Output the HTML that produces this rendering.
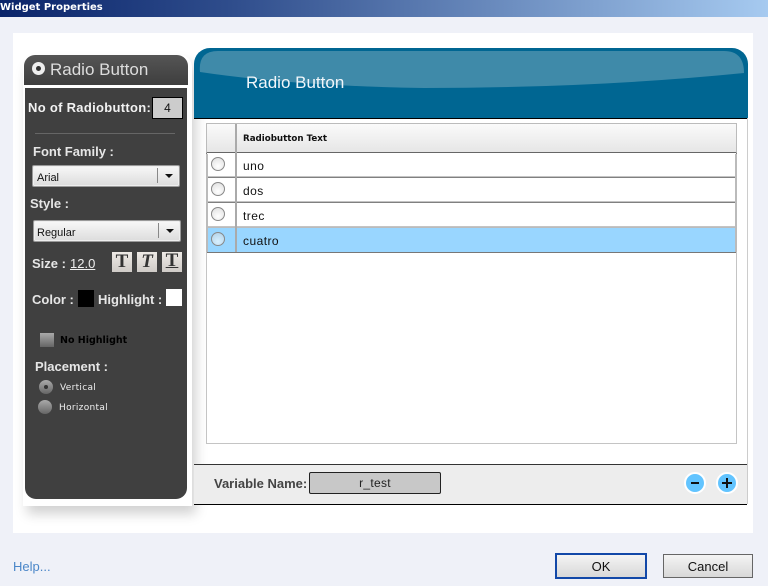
<!DOCTYPE html>
<html><head><meta charset="utf-8"><style>
html,body{margin:0;padding:0;width:768px;height:586px;overflow:hidden;background:#eff1f8;}
body{position:relative;font-family:"Liberation Sans",sans-serif;}
div,span{position:absolute;box-sizing:border-box;white-space:nowrap;}
.t{line-height:16px;}
.d{font-family:"DejaVu Sans",sans-serif;}
.lab{color:#e6e6e6;font-family:"Liberation Sans",sans-serif;font-weight:bold;font-size:13px;line-height:16px;}
.combo{background:linear-gradient(#f8f8f8,#dcdcdc);border:1px solid #999;border-radius:2px;height:22px;width:148px;box-shadow:inset 0 0 0 1px #eee;}
.tb{width:20px;height:20px;background:linear-gradient(#eeeae6,#cfcbc7);color:#333;font:bold 19px/20px "Liberation Serif",serif;text-align:center;}
.row{left:207px;width:529px;height:25px;background:#fff;border-bottom:1px solid #808080;box-shadow:inset 0 -1px 0 #c4c4c4;}
.radio{width:14px;height:14px;border-radius:50%;border:1px solid #888;background:radial-gradient(circle at 50% 70%,#fff,#dedede);left:211px;}
.cell{left:243px;font-size:12px;line-height:14px;color:#111;font-family:"Liberation Sans",sans-serif;letter-spacing:.45px;}
.rb{border-radius:50%;width:14px;height:14px;background:linear-gradient(#aaa,#666);}
</style></head><body>
<div style="left:0;top:0;width:768px;height:17px;background:linear-gradient(90deg,#0a246a,#2f4d8c 30%,#a6caf0);"></div>
<div class="t d" style="left:0;top:0;color:#fff;font-size:10px;font-weight:bold;">Widget Properties</div>
<div style="left:13px;top:33px;width:740px;height:500px;background:#fff;"></div>

<!-- Left panel -->
<div style="left:23px;top:55px;width:169px;height:451px;background:#fff;border-radius:12px 12px 0 0;box-shadow:4px 8px 12px rgba(0,0,0,.18);"></div>
<div style="left:24px;top:55px;width:164px;height:30px;background:linear-gradient(#555,#3e3e3e);border-radius:11px 11px 0 0;"></div>
<div style="left:25px;top:88px;width:162px;height:411px;background:#404040;border-radius:0 0 11px 11px;"></div>
<div style="left:32px;top:62px;width:13px;height:13px;border-radius:50%;background:#eee;"></div>
<div style="left:36px;top:66px;width:5px;height:5px;border-radius:50%;background:#333;"></div>
<div class="t" style="left:50px;top:61px;font-size:17px;line-height:18px;color:#ddd;">Radio Button</div>
<div class="lab" style="left:28px;top:100px;color:#f2f2f2;letter-spacing:.3px;">No of Radiobutton:</div>
<div style="left:152px;top:97px;width:31px;height:22px;background:#ccc;border:1px solid #000;color:#111;font-size:12px;line-height:20px;text-align:center;">4</div>
<div style="left:35px;top:133px;width:140px;height:1px;background:#666;"></div>
<div class="lab" style="left:33px;top:144px;">Font Family :</div>
<div class="combo" style="left:32px;top:165px;"></div>
<div class="t" style="left:37px;top:170px;font-size:11px;color:#111;">Arial</div>
<div style="left:157px;top:168px;width:1px;height:15px;background:#888;"></div>
<div style="left:165px;top:174px;border:4px solid transparent;border-top:4px solid #111;border-bottom:0;"></div>
<div class="lab" style="left:30px;top:196px;">Style :</div>
<div class="combo" style="left:33px;top:220px;"></div>
<div class="t" style="left:37px;top:225px;font-size:11px;color:#111;">Regular</div>
<div style="left:158px;top:223px;width:1px;height:15px;background:#888;"></div>
<div style="left:166px;top:229px;border:4px solid transparent;border-top:4px solid #111;border-bottom:0;"></div>
<div class="lab" style="left:32px;top:256px;">Size :</div>
<div class="t" style="left:70px;top:256px;font-size:13px;color:#eee;text-decoration:underline;">12.0</div>
<div class="tb" style="left:112px;top:252px;">T</div>
<div class="tb" style="left:137px;top:252px;font-style:italic;">T</div>
<div class="tb" style="left:162px;top:252px;text-decoration:underline;line-height:18px;">T</div>
<div class="lab" style="left:32px;top:292px;">Color :</div>
<div style="left:78px;top:290px;width:16px;height:17px;background:#000;"></div>
<div class="lab" style="left:98px;top:292px;">Highlight :</div>
<div style="left:166px;top:289px;width:16px;height:17px;background:#fff;"></div>
<div style="left:40px;top:333px;width:14px;height:14px;background:linear-gradient(#aaa,#666);"></div>
<div class="t d" style="left:60px;top:333px;font-size:9.5px;font-weight:bold;color:#000;">No Highlight</div>
<div class="lab" style="left:35px;top:359px;">Placement :</div>
<div class="rb" style="left:39px;top:380px;"></div>
<div style="left:44px;top:385px;width:4px;height:4px;border-radius:50%;background:#333;"></div>
<div class="t d" style="left:60px;top:380px;font-size:9px;color:#eee;letter-spacing:.3px;">Vertical</div>
<div class="rb" style="left:38px;top:400px;"></div>
<div class="t d" style="left:59px;top:400px;font-size:9px;color:#eee;letter-spacing:.3px;">Horizontal</div>

<!-- Right panel -->
<div style="left:194px;top:48px;width:554px;height:71px;background:#006692;border-radius:16px 16px 0 0;border-bottom:1px solid #000;overflow:hidden;"></div>
<svg style="position:absolute;left:194px;top:48px" width="554" height="50"><path d="M6 24 Q4 3 24 3 L530 3 Q550 3 550 25 Q400 40 230 40 Q100 38 6 24Z" fill="#3f8aa9"/></svg>
<div class="t" style="left:246px;top:74px;color:#f0f6fa;font-size:17px;line-height:18px;">Radio Button</div>
<div style="left:747px;top:118px;width:1px;height:386px;background:#ccc;"></div>
<div style="left:206px;top:123px;width:531px;height:321px;background:#fff;border:1px solid #c4c4c4;"></div>
<div style="left:206px;top:123px;width:531px;height:31px;background:linear-gradient(#fafafa,#e6e6e6);border:1px solid #bbb;border-bottom:2px solid #666;"></div>
<div class="t d" style="left:243px;top:131px;font-size:8.7px;font-weight:bold;color:#111;">Radiobutton Text</div>
<div class="row" style="top:153px;"></div>
<div class="row" style="top:178px;"></div>
<div class="row" style="top:203px;border-bottom-color:#bbb;"></div>
<div class="row" style="top:228px;background:#99d6ff;border-bottom-color:#777;box-shadow:none;"></div>
<div style="left:206px;top:154px;width:2px;height:98px;background:#bbb;"></div>
<div style="left:735px;top:154px;width:2px;height:98px;background:#bbb;"></div>
<div style="left:235px;top:124px;width:2px;height:128px;background:#aaa;"></div>
<div class="radio" style="top:157px;"></div>
<div class="radio" style="top:182px;"></div>
<div class="radio" style="top:207px;"></div>
<div class="radio" style="top:232px;background:radial-gradient(circle at 50% 70%,#d8f0ff,#b0d0e6);"></div>
<div class="cell" style="top:159px;">uno</div>
<div class="cell" style="top:184px;">dos</div>
<div class="cell" style="top:209px;">trec</div>
<div class="cell" style="top:234px;">cuatro</div>

<!-- Bottom bar -->
<div style="left:194px;top:464px;width:553px;height:41px;background:#ededed;border-top:1px solid #333;border-bottom:1px solid #000;"></div>
<div class="lab" style="left:214px;top:476px;color:#444;">Variable Name:</div>
<div style="left:309px;top:472px;width:132px;height:22px;background:#c8c8c8;border:1px solid #222;border-radius:2px;color:#222;font-size:12px;line-height:20px;text-align:center;letter-spacing:.3px;">r_test</div>
<div style="left:684px;top:472px;width:22px;height:22px;border-radius:50%;background:#62c4ff;border:2px solid #fff;"></div>
<div style="left:691px;top:482px;width:8px;height:2px;background:#111;"></div>
<div style="left:716px;top:472px;width:22px;height:22px;border-radius:50%;background:#62c4ff;border:2px solid #fff;"></div>
<div style="left:722px;top:482px;width:10px;height:2px;background:#111;"></div>
<div style="left:726px;top:478px;width:2px;height:10px;background:#111;"></div>

<!-- Footer -->
<div class="t" style="left:13px;top:559px;font-size:13px;color:#4a86c8;">Help...</div>
<div style="left:555px;top:553px;width:92px;height:26px;background:linear-gradient(#f4f4f4,#d8d8d8);border:2px solid #1248a8;font-size:13px;line-height:23px;text-align:center;color:#111;">OK</div>
<div style="left:663px;top:554px;width:90px;height:24px;background:linear-gradient(#f4f4f4,#d8d8d8);border:1px solid #666;font-size:13px;line-height:23px;text-align:center;color:#111;">Cancel</div>
</body></html>
